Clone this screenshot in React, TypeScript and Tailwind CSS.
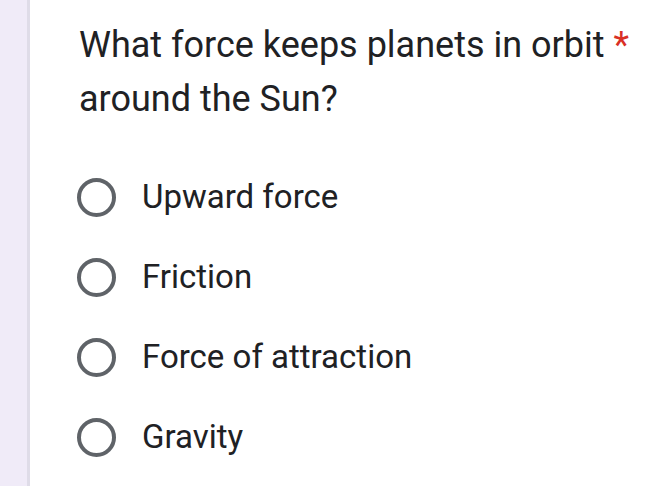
const options = ["Upward force", "Friction", "Force of attraction", "Gravity"];

export default function App() {
  return (
    <div className="flex h-[486px] w-[648px] overflow-hidden bg-white font-['Roboto',sans-serif] text-[#202124]">
      <div className="w-[30px] shrink-0 border-r-[3px] border-[#dfdce8] bg-[#f0ebf8]" />
      <div className="flex flex-1 flex-col pl-[47px] pt-[18px]">
        <h1 className="pl-[2px] text-[36px] leading-[54px] font-normal">
          What force keeps planets in orbit <span className="text-[#d93025]">*</span>
          <br />
          around the Sun?
        </h1>
        <div className="mt-[31px] flex flex-col">
          {options.map((o) => (
            <label key={o} className="flex h-[80px] items-center gap-[26px]">
              <span className="h-[39px] w-[39px] shrink-0 rounded-full border-[4px] border-[#5f6368]" />
              <span className="text-[33px] leading-[80px]">{o}</span>
            </label>
          ))}
        </div>
      </div>
    </div>
  );
}
